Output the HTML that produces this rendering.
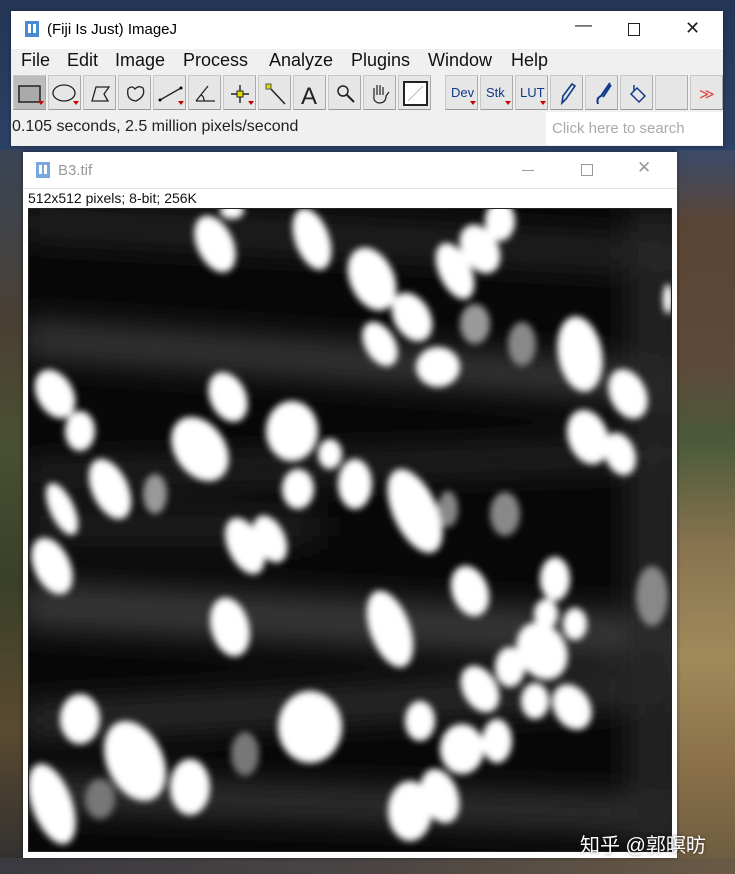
<!DOCTYPE html>
<html><head><meta charset="utf-8"><style>
*{margin:0;padding:0;box-sizing:border-box}
body{width:735px;height:874px;overflow:hidden;position:relative;font-family:"Liberation Sans",Arial,sans-serif;
background:linear-gradient(180deg,#243656 0%,#2d4266 18%,#3a4a5c 30%,#3d3a30 45%,#4a4230 60%,#5a4a30 80%,#3a3a40 100%);}
.bgr{position:absolute;left:677px;top:150px;width:58px;height:724px;background:linear-gradient(180deg,#3b4a6a 0%,#5a4535 10%,#5e4a3a 30%,#4a5a3a 40%,#8a7450 55%,#a08a5a 70%,#8a7048 85%,#6a5a40 100%)}
.bgl{position:absolute;left:0;top:150px;width:24px;height:724px;background:linear-gradient(180deg,#3a4456 0%,#4a4032 25%,#4a5032 40%,#3a4028 60%,#5a4a30 80%,#2e2e30 100%)}
.bgb{position:absolute;left:0;top:858px;width:735px;height:16px;background:linear-gradient(90deg,#3a3a40,#4a4444,#6a5a45)}
.win{position:absolute;left:11px;top:11px;width:712px;height:135px;background:#f0f0f0;box-shadow:0 0 4px rgba(0,0,0,.4)}
.tb{height:38px;background:#fff;position:relative;font-size:15px;color:#000}
.tb .t{position:absolute;left:36px;top:10px}
.ico{position:absolute;width:14px;height:16px;background:#4a8ad0}
.ico:after{content:"";position:absolute;left:3px;top:3px;width:3px;height:9px;background:#fff;box-shadow:5px 0 #fff}
.ctl{position:absolute;top:8px;font-size:17px;color:#222}
.menu{height:24px;font-size:18px;color:#111;position:relative}
.menu span{position:absolute;top:1px}
.tools{position:absolute;top:62px;left:0;width:712px;height:37px}
.bt{position:absolute;top:2px;width:33px;height:35px;background:#e6e6e6;border:1px solid #c8c8c8;border-bottom-color:#999;border-right-color:#aaa}
.bt svg{position:absolute;left:0;top:0}
.tri{position:absolute;right:1px;bottom:4px;width:0;height:0;border-left:3px solid transparent;border-right:3px solid transparent;border-top:4px solid #c00}
.status{position:absolute;left:0;top:99px;width:712px;height:36px;font-size:16px;color:#222}
.status .s{position:absolute;left:1px;top:8px}
.search{position:absolute;left:535px;top:2px;width:177px;height:33px;background:#fff;color:#aaa;font-size:15px;padding:8px 0 0 6px}
.iw{position:absolute;left:23px;top:152px;width:654px;height:706px;background:#fff;box-shadow:0 0 4px rgba(0,0,0,.4)}
.iw .tt{position:absolute;left:35px;top:10px;font-size:15px;color:#999}
.iw .info{position:absolute;left:5px;top:38px;font-size:14px;color:#111}
.iw .line{position:absolute;left:0;top:36px;width:654px;height:1px;background:#e4e4e4}
.img{position:absolute;left:5px;top:56px;width:644px;height:644px;border:1px solid #222;overflow:hidden;background:#0a0a0a}
.wm{position:absolute;left:580px;top:829px;font-family:"Liberation Sans","Noto Sans CJK SC",sans-serif;font-size:20px;color:#fff;text-shadow:0 0 3px rgba(0,0,0,.6)}
</style></head><body>
<div class="bgl"></div><div class="bgr"></div><div class="bgb"></div>
<div class="win">
 <div class="tb"><div class="ico" style="left:14px;top:10px"></div><div class="t">(Fiji Is Just) ImageJ</div>
  <div class="ctl" style="left:564px;top:4px">—</div>
  <div style="position:absolute;left:617px;top:12px;width:12px;height:13px;border:1.3px solid #222"></div>
  <div class="ctl" style="left:674px;top:7px;font-size:18px">✕</div></div>
 <div class="menu"><span style="left:10px">File</span><span style="left:56px">Edit</span><span style="left:104px">Image</span><span style="left:172px">Process</span><span style="left:258px">Analyze</span><span style="left:340px">Plugins</span><span style="left:417px">Window</span><span style="left:500px">Help</span></div>
 <div class="tools">
  <div class="bt" style="left:2px;background:#bcbcbc"><svg width="33" height="35"><rect x="5" y="10" width="21" height="16" fill="#aaa" stroke="#222" stroke-width="1.5"/></svg><div class="tri"></div></div>
  <div class="bt" style="left:37px"><svg width="33" height="35"><ellipse cx="15" cy="17" rx="11" ry="8" fill="none" stroke="#222" stroke-width="1.3"/></svg><div class="tri"></div></div>
  <div class="bt" style="left:72px"><svg width="33" height="35"><path d="M8 25 L12 11 L25 11 L20 18 L24 25 Z" fill="none" stroke="#222" stroke-width="1.3"/></svg></div>
  <div class="bt" style="left:107px"><svg width="33" height="35"><path d="M9 13 Q13 9 16 13 Q20 9 24 12 Q27 20 17 25 Q7 24 9 13Z" fill="none" stroke="#222" stroke-width="1.3"/></svg></div>
  <div class="bt" style="left:142px"><svg width="33" height="35"><path d="M6 24 L27 12" stroke="#222" stroke-width="1.3"/><circle cx="6" cy="24" r="1.5"/><circle cx="27" cy="12" r="1.5"/></svg><div class="tri"></div></div>
  <div class="bt" style="left:177px"><svg width="33" height="35"><path d="M7 25 L26 25 M7 25 L19 10 M15 25 Q15 20 12 19" fill="none" stroke="#222" stroke-width="1.3"/></svg></div>
  <div class="bt" style="left:212px"><svg width="33" height="35"><path d="M16 9 L16 27 M7 18 L25 18" stroke="#222" stroke-width="1.4"/><rect x="13" y="15" width="6" height="6" fill="#dd0" stroke="#222"/></svg><div class="tri"></div></div>
  <div class="bt" style="left:247px"><svg width="33" height="35"><path d="M11 12 L26 28" stroke="#222" stroke-width="1.5"/><rect x="7" y="8" width="5" height="5" fill="#dd0" stroke="#555"/></svg></div>
  <div class="bt" style="left:282px"><svg width="33" height="35"><text x="7" y="28" font-size="24" font-family="Liberation Sans" fill="#222">A</text></svg></div>
  <div class="bt" style="left:317px"><svg width="33" height="35"><circle cx="14" cy="15" r="5" fill="none" stroke="#222" stroke-width="1.5"/><path d="M18 19 L25 26" stroke="#222" stroke-width="2"/></svg></div>
  <div class="bt" style="left:352px"><svg width="33" height="35"><path d="M10 20 L10 12 M13 19 L13 9 M16 19 L16 9 M19 19 L19 11 M10 20 Q9 26 15 27 Q22 27 22 20 L25 16" fill="none" stroke="#222" stroke-width="1.2"/></svg></div>
  <div class="bt" style="left:387px"><svg width="33" height="35"><rect x="5" y="6" width="23" height="23" fill="#fff" stroke="#222" stroke-width="2"/><path d="M9 25 L24 10" stroke="#ccc" stroke-width="1.5"/></svg></div>
  <div class="bt" style="left:434px"><svg width="33" height="35"><text x="5" y="21" font-size="13" fill="#123a8a">Dev</text></svg><div class="tri"></div></div>
  <div class="bt" style="left:469px"><svg width="33" height="35"><text x="5" y="21" font-size="13" fill="#123a8a">Stk</text></svg><div class="tri"></div></div>
  <div class="bt" style="left:504px"><svg width="33" height="35"><text x="4" y="21" font-size="13" fill="#123a8a">LUT</text></svg><div class="tri"></div></div>
  <div class="bt" style="left:539px"><svg width="33" height="35"><path d="M11 27 L12 20 L21 8 L24 10 L15 23 Z" fill="none" stroke="#123a8a" stroke-width="1.6"/></svg></div>
  <div class="bt" style="left:574px"><svg width="33" height="35"><path d="M12 28 Q10 22 15 20 L24 7 M17 21 L25 9" fill="none" stroke="#123a8a" stroke-width="2"/></svg></div>
  <div class="bt" style="left:609px"><svg width="33" height="35"><path d="M10 18 L16 12 L24 20 L18 26 Z M13 15 L13 9" fill="none" stroke="#123a8a" stroke-width="1.5"/></svg></div>
  <div class="bt" style="left:644px"></div>
  <div class="bt" style="left:679px"><svg width="33" height="35"><text x="8" y="23" font-size="15" fill="#d44">≫</text></svg></div>
 </div>
 <div class="status"><div class="s">0.105 seconds, 2.5 million pixels/second</div><div class="search">Click here to search</div></div>
</div>
<div class="iw">
 <div class="ico" style="left:13px;top:10px;background:#7aa8dd"></div><div class="tt">B3.tif</div>
 <div style="position:absolute;left:499px;top:18px;width:12px;height:1px;background:#999"></div>
 <div style="position:absolute;left:558px;top:12px;width:12px;height:12px;border:1px solid #999"></div>
 <div style="position:absolute;left:614px;top:6px;font-size:17px;color:#999">✕</div>
 <div class="line"></div>
 <div class="info">512x512 pixels; 8-bit; 256K</div>
 <div class="img">
 <svg width="644" height="644" viewBox="29 210 644 644">
  <defs><filter id="b"><feGaussianBlur stdDeviation="3.5"/></filter><filter id="bb"><feGaussianBlur stdDeviation="16"/></filter></defs>
  <rect x="29" y="210" width="644" height="644" fill="#080808"/>
  <g filter="url(#bb)">
   <rect x="20" y="225" width="700" height="30" fill="#262626" transform="rotate(3 350 240)"/>
   <rect x="20" y="345" width="700" height="35" fill="#3a3a3a" transform="rotate(4 350 360)"/>
   <rect x="20" y="455" width="700" height="22" fill="#2a2a2a" transform="rotate(-2 350 465)"/>
   <rect x="20" y="600" width="700" height="45" fill="#3a3a3a" transform="rotate(3 350 620)"/>
   <rect x="20" y="690" width="700" height="30" fill="#303030" transform="rotate(-3 350 700)"/>
   <rect x="20" y="790" width="700" height="30" fill="#383838" transform="rotate(2 350 800)"/>
   <rect x="20" y="515" width="300" height="25" fill="#262626"/>
   <rect x="630" y="210" width="50" height="644" fill="#262626"/>
  </g>
  <g filter="url(#b)" fill="#fff">
   <ellipse cx="215" cy="245" rx="18" ry="30" transform="rotate(-25 215 245)"/>
   <ellipse cx="312" cy="240" rx="17" ry="32" transform="rotate(-20 312 240)"/>
   <ellipse cx="372" cy="280" rx="22" ry="33" transform="rotate(-25 372 280)"/>
   <ellipse cx="412" cy="318" rx="18" ry="26" transform="rotate(-30 412 318)"/>
   <ellipse cx="380" cy="345" rx="15" ry="24" transform="rotate(-30 380 345)"/>
   <ellipse cx="438" cy="368" rx="22" ry="20"/>
   <ellipse cx="455" cy="272" rx="16" ry="30" transform="rotate(-25 455 272)"/>
   <ellipse cx="480" cy="250" rx="18" ry="26" transform="rotate(-30 480 250)"/>
   <ellipse cx="500" cy="222" rx="15" ry="20"/>
   <ellipse cx="475" cy="325" rx="15" ry="20" fill="#999"/>
   <ellipse cx="522" cy="345" rx="14" ry="22" fill="#888"/>
   <ellipse cx="580" cy="355" rx="22" ry="38" transform="rotate(-10 580 355)"/>
   <ellipse cx="628" cy="395" rx="18" ry="26" transform="rotate(-25 628 395)"/>
   <ellipse cx="588" cy="438" rx="20" ry="28" transform="rotate(-20 588 438)"/>
   <ellipse cx="620" cy="455" rx="15" ry="22" transform="rotate(-20 620 455)"/>
   <ellipse cx="668" cy="300" rx="5" ry="15"/>
   <ellipse cx="55" cy="395" rx="18" ry="26" transform="rotate(-30 55 395)"/>
   <ellipse cx="80" cy="432" rx="15" ry="20"/>
   <ellipse cx="228" cy="398" rx="18" ry="26" transform="rotate(-25 228 398)"/>
   <ellipse cx="200" cy="450" rx="25" ry="35" transform="rotate(-35 200 450)"/>
   <ellipse cx="292" cy="432" rx="26" ry="30"/>
   <ellipse cx="298" cy="490" rx="16" ry="20"/>
   <ellipse cx="330" cy="455" rx="12" ry="15"/>
   <ellipse cx="355" cy="485" rx="17" ry="25"/>
   <ellipse cx="415" cy="512" rx="22" ry="45" transform="rotate(-25 415 512)"/>
   <ellipse cx="448" cy="510" rx="10" ry="18" fill="#888"/>
   <ellipse cx="505" cy="515" rx="15" ry="22" fill="#888"/>
   <ellipse cx="110" cy="490" rx="18" ry="32" transform="rotate(-25 110 490)"/>
   <ellipse cx="62" cy="510" rx="12" ry="28" transform="rotate(-25 62 510)"/>
   <ellipse cx="155" cy="495" rx="12" ry="20" fill="#999"/>
   <ellipse cx="52" cy="567" rx="18" ry="30" transform="rotate(-25 52 567)"/>
   <ellipse cx="245" cy="547" rx="17" ry="30" transform="rotate(-25 245 547)"/>
   <ellipse cx="270" cy="540" rx="15" ry="25" transform="rotate(-25 270 540)"/>
   <ellipse cx="470" cy="592" rx="18" ry="26" transform="rotate(-20 470 592)"/>
   <ellipse cx="555" cy="580" rx="15" ry="22"/>
   <ellipse cx="546" cy="615" rx="12" ry="15"/>
   <ellipse cx="575" cy="625" rx="12" ry="16"/>
   <ellipse cx="542" cy="652" rx="24" ry="30" transform="rotate(-30 542 652)"/>
   <ellipse cx="510" cy="668" rx="15" ry="20"/>
   <ellipse cx="480" cy="690" rx="17" ry="25" transform="rotate(-30 480 690)"/>
   <ellipse cx="535" cy="702" rx="14" ry="18"/>
   <ellipse cx="572" cy="708" rx="18" ry="24" transform="rotate(-30 572 708)"/>
   <ellipse cx="390" cy="630" rx="20" ry="40" transform="rotate(-20 390 630)"/>
   <ellipse cx="230" cy="628" rx="19" ry="30" transform="rotate(-15 230 628)"/>
   <ellipse cx="652" cy="597" rx="16" ry="30" fill="#888"/>
   <ellipse cx="80" cy="720" rx="20" ry="25"/>
   <ellipse cx="135" cy="762" rx="28" ry="42" transform="rotate(-25 135 762)"/>
   <ellipse cx="190" cy="788" rx="20" ry="28"/>
   <ellipse cx="310" cy="728" rx="32" ry="36"/>
   <ellipse cx="245" cy="755" rx="14" ry="22" fill="#777"/>
   <ellipse cx="420" cy="722" rx="15" ry="20"/>
   <ellipse cx="462" cy="750" rx="22" ry="25"/>
   <ellipse cx="497" cy="742" rx="15" ry="22"/>
   <ellipse cx="410" cy="812" rx="22" ry="30"/>
   <ellipse cx="440" cy="797" rx="18" ry="28" transform="rotate(-20 440 797)"/>
   <ellipse cx="52" cy="805" rx="20" ry="42" transform="rotate(-20 52 805)"/>
   <ellipse cx="100" cy="800" rx="15" ry="20" fill="#777"/>
   <ellipse cx="232" cy="212" rx="12" ry="8"/>
  </g>
 </svg>
 </div>
</div>
<div class="wm">知乎 @郭暝昉</div>
</body></html>
